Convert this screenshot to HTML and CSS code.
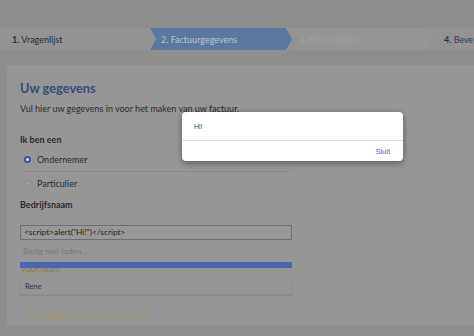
FILE: index.html
```html
<!DOCTYPE html>
<html>
<head>
<meta charset="utf-8">
<link rel="stylesheet" href="styles.css">
</head>
<body>
<div class="page">
  <nav class="stepper">
    <div class="step step-done"><span><b>1.</b> Vragenlijst</span></div>
    <div class="step step-active"><span>2. Factuurgegevens</span></div>
    <div class="step step-todo"><span>3. Extra Opties</span></div>
    <div class="step step-next"><span><b>4.</b> Beve</span></div>
  </nav>
  <main class="card">
    <h1 class="title">Uw gegevens</h1>
    <p class="intro">Vul hier uw gegevens in voor het maken van uw factuur.</p>
    <div class="label">Ik ben een</div>
    <div class="radios">
      <div class="radio-row">
        <span class="radio radio-on"></span><span>Ondernemer</span>
      </div>
      <div class="radio-row">
        <span class="radio"></span><span>Particulier</span>
      </div>
    </div>
    <div class="label label-company">Bedrijfsnaam</div>
    <div class="field">
      <div class="input">&lt;script&gt;alert("Hi!")&lt;/script&gt;</div>
      <div class="dropdown">Bezig met laden...</div>
      <div class="progress"></div>
      <div class="label-error">Voornaam</div>
      <div class="input input-name">Rene</div>
      <div class="error">Vul alstublieft uw voornaam in.</div>
    </div>
  </main>
  <div class="modal">
    <div class="modal-body">Hi!</div>
    <div class="modal-foot"><span class="modal-btn">Sluit</span></div>
  </div>
</div>
</body>
</html>
```

FILE: styles.css
```css
* { box-sizing: border-box; }
html, body { margin: 0; padding: 0; }
body {
  background: #8e8e8e;
  font-family: Lato, "Noto Sans", sans-serif;
  color: #2b2b2b;
  width: 474px;
  height: 336px;
  overflow: hidden;
}
.page {
  position: relative;
  height: 336px;
  padding-top: 28px;
}
.stepper {
  display: flex;
  height: 22px;
  background: #939393;
  font-size: 9px;
  white-space: nowrap;
}
.step {
  display: flex;
  align-items: center;
  height: 22px;
  flex: none;
}
.step b { font-weight: 700; }
.step-done {
  width: 156px;
  padding-left: 12px;
  color: #2b2b2b;
  background: #939393;
  clip-path: polygon(0 0, calc(100% - 6px) 0, 100% 50%, calc(100% - 6px) 100%, 0 100%);
  margin-right: -6px;
  position: relative;
  z-index: 1;
}
.step-active {
  width: 142px;
  padding-left: 11px;
  background: #5a78a0;
  color: #b7c6d9;
  clip-path: polygon(0 0, calc(100% - 6px) 0, 100% 50%, calc(100% - 6px) 100%, 0 100%, 6px 50%);
}
.step-todo {
  width: 140px;
  padding-left: 7px;
  color: #a0a0a0;
  clip-path: polygon(0 0, calc(100% - 6px) 0, 100% 50%, calc(100% - 6px) 100%, 0 100%, 6px 50%);
  background: #959595;
}
.step-next {
  width: 60px;
  padding-left: 12px;
  color: #2e3a5e;
  clip-path: polygon(0 0, 100% 0, 100% 100%, 0 100%, 6px 50%);
  background: #939393;
}
.step-next b { color: #27325a; }
.card {
  margin: 15px 0 0 7px;
  background: #979696;
  height: 260px;
  padding: 16px 13px 0 13px;
}
.title {
  margin: 0;
  font-size: 12.8px;
  font-weight: 700;
  color: #364c78;
  line-height: 15px;
}
.intro {
  margin: 7px 0 0;
  font-size: 9px;
  line-height: 11px;
  color: #2b2b2b;
}
.label {
  margin-top: 20px;
  font-size: 9px;
  font-weight: 700;
  line-height: 11px;
}
.label-company { margin-top: 5px; }
.radios {
  margin-top: 3px;
  width: 272px;
}
.radio-row {
  display: flex;
  align-items: center;
  gap: 6px;
  height: 23px;
  padding-left: 4px;
  font-size: 9px;
  color: #2b2b2b;
}
.radio-row + .radio-row { border-top: 1px solid #8b8b8b; }
.radio {
  width: 7px;
  height: 7px;
  border-radius: 50%;
  background: #9c9c9c;
  border: 1px solid #8a8a8a;
  flex: none;
}
.radio-on {
  background: #dcdcdc;
  border: 2px solid #3a54a0;
}
.field {
  margin-top: 15px;
  width: 272px;
}
.input {
  height: 15px;
  line-height: 13px;
  border: 1px solid #6f6f6f;
  background: #999898;
  padding-left: 3px;
  color: #222;
  font-size: 8.4px;
}
.dropdown {
  height: 22px;
  line-height: 22px;
  padding-left: 3px;
  color: #7a7a7a;
  font-size: 8.4px;
  background: #979696;
}
.progress {
  height: 6px;
  background: #4a66b0;
  position: relative;
  z-index: 1;
}
.label-error {
  height: 10px;
  margin-top: -4px;
  margin-bottom: 4px;
  line-height: 10px;
  color: #8c7c52;
  font-size: 9px;
  overflow: hidden;
}
.input-name {
  height: 17px;
  line-height: 15px;
  border: 1px solid #8d8d8d;
  border-top-color: #939393;
  background: #979696;
  padding-left: 4px;
  font-size: 7.4px;
  color: #333;
  box-shadow: 0 1px 1px rgba(0,0,0,0.08);
}
.error {
  margin-top: 14px;
  padding-left: 8px;
  color: #a3955f;
  font-size: 9px;
  line-height: 11px;
}
.modal {
  position: absolute;
  left: 182px;
  top: 112px;
  width: 221px;
  height: 49px;
  background: #fff;
  border-radius: 4px;
  box-shadow: 0 2px 6px rgba(0,0,0,0.4);
  font-family: "Liberation Sans", Arial, sans-serif;
  display: flex;
  flex-direction: column;
}
.modal-body {
  height: 29px;
  padding: 11px 0 0 12px;
  font-size: 7px;
  color: #444;
  border-bottom: 1px solid #e2e2e2;
}
.modal-foot {
  flex: 1;
  display: flex;
  justify-content: flex-end;
  align-items: center;
  padding-right: 13px;
}
.modal-btn {
  font-size: 7.5px;
  color: #3a6fd2;
}
```
